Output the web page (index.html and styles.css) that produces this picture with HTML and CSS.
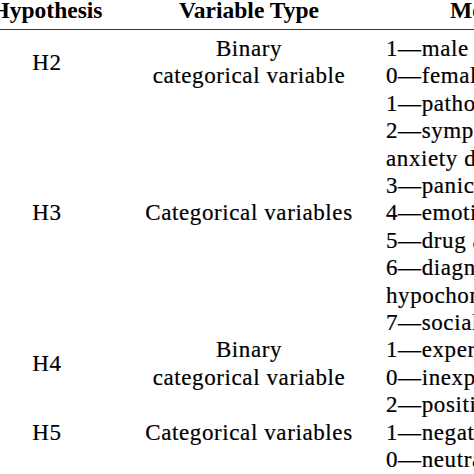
FILE: index.html
```html
<!DOCTYPE html>
<html>
<head>
<meta charset="utf-8">
<link rel="stylesheet" href="styles.css">
</head>
<body>
<div class="table">
  <div class="head c1">Hypothesis</div>
  <div class="head c2">Variable Type</div>
  <div class="head c3">Meaning</div>

  <div class="cell c1 first">H2</div>
  <div class="cell c2 first"><div>Binary</div><div>categorical variable</div></div>
  <div class="cell c3 first"><div>1—male</div><div>0—female</div></div>

  <div class="cell c1">H3</div>
  <div class="cell c2">Categorical variables</div>
  <div class="cell c3">
    <div>1—pathological anxiety</div>
    <div>2—symptoms of generalized</div>
    <div>anxiety disorder</div>
    <div>3—panic disorder</div>
    <div>4—emotional disorder</div>
    <div>5—drug addiction</div>
    <div>6—diagnosed</div>
    <div>hypochondria</div>
    <div>7—social phobia</div>
  </div>

  <div class="cell c1">H4</div>
  <div class="cell c2"><div>Binary</div><div>categorical variable</div></div>
  <div class="cell c3"><div>1—experienced</div><div>0—inexperienced</div></div>

  <div class="cell c1">H5</div>
  <div class="cell c2">Categorical variables</div>
  <div class="cell c3"><div>2—positive</div><div>1—negative</div><div>0—neutral</div></div>
</div>
</body>
</html>
```
FILE: styles.css
```css
html, body {
  margin: 0;
  padding: 0;
  background: #fff;
  overflow: hidden;
  width: 474px;
  height: 474px;
}
.table {
  display: grid;
  grid-template-columns: 130px 274px 300px;
  margin-left: -18px;
  font-family: "Liberation Serif", "Times New Roman", serif;
  color: #000;
  width: 704px;
}
.head {
  font-weight: bold;
  font-size: 23.5px;
  line-height: 20px;
  padding-bottom: 9px;
  border-bottom: 1.5px solid #333;
  white-space: nowrap;
}
.head.c1, .head.c2 { text-align: center; }
.head.c3 { padding-left: 64px; }
.cell {
  font-size: 23px;
  letter-spacing: 0.6px;
  line-height: 27.4px;
  white-space: nowrap;
  -webkit-text-stroke: 0.2px #000;
}
.cell.first { padding-top: 5px; }
.cell.c1, .cell.c2 {
  text-align: center;
  align-self: center;
}
.cell.c1.first, .cell.c2.first {
  align-self: stretch;
  display: flex;
  flex-direction: column;
  justify-content: center;
}
```
